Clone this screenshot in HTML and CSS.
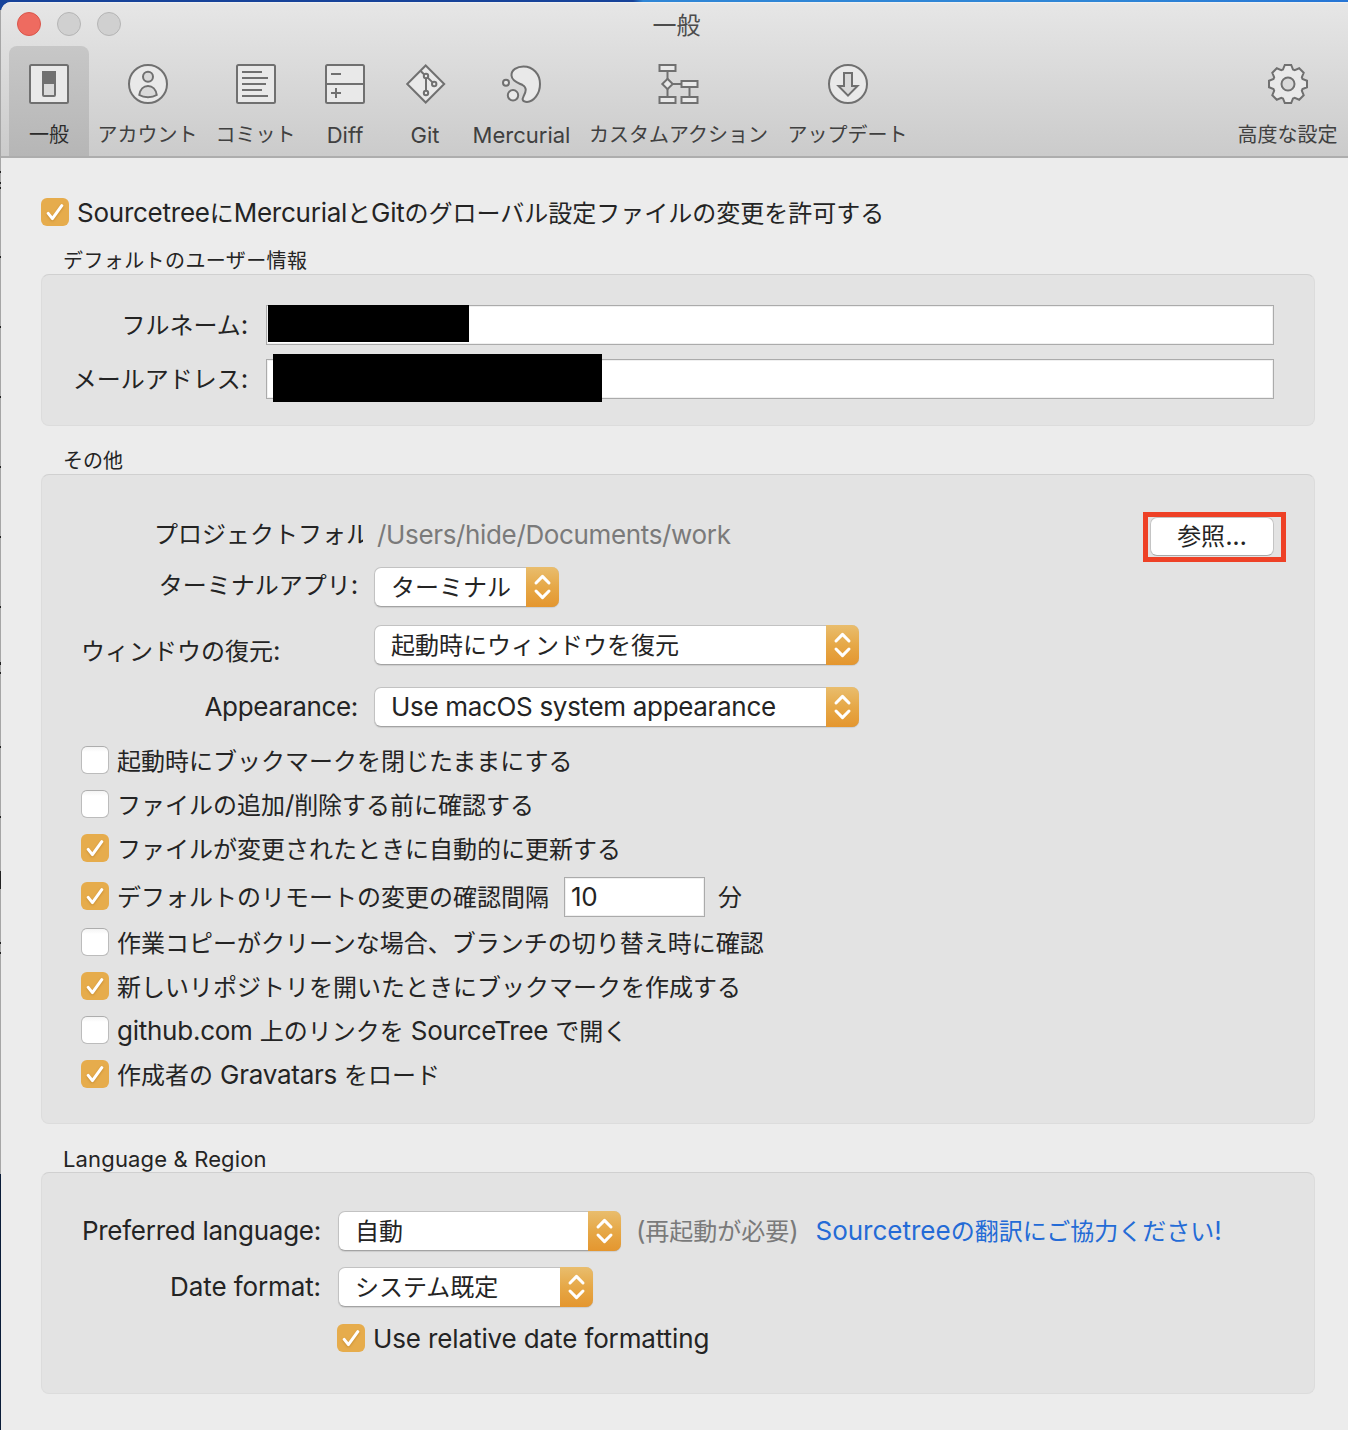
FILE: index.html
```html
<!DOCTYPE html>
<html lang="ja">
<head>
<meta charset="utf-8">
<title>一般</title>
<link rel="stylesheet" href="styles.css">
</head>
<body>
<svg class="defs" width="0" height="0" aria-hidden="true">
  <symbol id="check" viewBox="0 0 28 28"><path d="M7.2 15.4 11.4 20.6 20.8 7.6"/></symbol>
  <symbol id="updown" viewBox="0 0 33 40"><path d="M10 16 16.5 9.4 23 16M10 24 16.5 30.6 23 24"/></symbol>
</svg>
<div class="window">
  <header class="header">
    <div class="titlebar">
      <div class="lights"><i class="light close"></i><i class="light"></i><i class="light"></i></div>
      <h1 class="title">一般</h1>
    </div>
    <nav class="toolbar">
      <div class="tool general active">
        <svg class="icon" viewBox="0 0 40 40"><rect x="1" y="1" width="38" height="38" rx="1.5"/><rect class="plain" x="14" y="8" width="12" height="24" rx="1"/><path class="solid" d="M14 8h12v11H14z"/></svg>
        <span>一般</span>
      </div>
      <div class="tool account">
        <svg class="icon" viewBox="0 0 40 40"><circle cx="20" cy="20" r="19"/><circle class="plain" cx="20" cy="12.8" r="5"/><path class="plain" d="M11.3 31C12 25.500 15.500 22 20 22s8 3.500 8.700 9c-2.500 1.600-5.600 2.300-8.700 2.300s-6.200-.7-8.700-2.300z"/></svg>
        <span>アカウント</span>
      </div>
      <div class="tool commit">
        <svg class="icon" viewBox="0 0 40 40"><rect x="1" y="1" width="38" height="38" rx="1.5"/><path d="M6 8h20M6 14h26M6 20h24M6 26h20M6 32h26"/></svg>
        <span>コミット</span>
      </div>
      <div class="tool diff">
        <svg class="icon" viewBox="0 0 40 40"><rect x="1" y="1" width="38" height="38" rx="1.5"/><path d="M1 20h38M6 10h10M6 29h10M11 24v10"/></svg>
        <span class="en">Diff</span>
      </div>
      <div class="tool git">
        <svg class="icon" viewBox="-0.7 0 40 40"><path d="M20 1.500 38.500 20 20 38.500 1.500 20z"/><path d="M15 7l3.500 3.500M20.300 14v13M22 13.600l4.800 4.800"/><circle cx="20.300" cy="12" r="2.200"/><circle cx="28.500" cy="20" r="2.200"/><circle cx="20.300" cy="29" r="2.200"/></svg>
        <span class="en">Git</span>
      </div>
      <div class="tool mercurial">
        <svg class="icon" viewBox="0.5 0 40 40"><circle cx="4.500" cy="18.700" r="3"/><circle cx="11.500" cy="31.300" r="5.200"/><path d="M22 2.500C31.500 2.500 38.500 10 38.500 20S32 37.900 25.500 37.900C21 37.900 20.300 35.500 22 32.500C24.800 27.500 25.500 23.500 21 21C17.500 19.200 10.300 17.500 10 11.500C9.700 6 15.500 2.500 22 2.500z"/></svg>
        <span class="en">Mercurial</span>
      </div>
      <div class="tool custom">
        <svg class="icon" viewBox="0.5 0 40 40"><path d="M9 7v9M9 24v9M14 20h9M31 24v9"/><rect x="1" y="1" width="16" height="6"/><rect x="23" y="17" width="16" height="6"/><rect x="1" y="33" width="16" height="6"/><rect x="23" y="33" width="16" height="6"/><path d="M9 14.800 14.200 20 9 25.200 3.800 20z"/></svg>
        <span>カスタムアクション</span>
      </div>
      <div class="tool update">
        <svg class="icon" viewBox="0 0 40 40"><circle cx="20" cy="20" r="19"/><path class="plain" d="M16 9h8v13h5.500L20 31.600 10.500 22H16z"/></svg>
        <span>アップデート</span>
      </div>
      <div class="tool advanced">
        <svg class="icon" viewBox="0 0 40 40"><path d="M15 5.500 16.800 1H23.200L25 5.500 26.700 6.200 31.200 4.300 35.700 8.800 33.800 13.300 34.500 15 39 16.800V23.200L34.500 25 33.800 26.700 35.700 31.200 31.200 35.700 26.700 33.800 25 34.500 23.200 39H16.800L15 34.500 13.300 33.800 8.800 35.700 4.300 31.200 6.200 26.700 5.500 25 1 23.200V16.800L5.500 15 6.200 13.300 4.300 8.800 8.800 4.300 13.300 6.200z"/><circle class="plain" cx="20" cy="20" r="6.500"/></svg>
        <span>高度な設定</span>
      </div>
    </nav>
  </header>

  <main class="content">
    <label class="check-row"><span class="box on"><svg><use href="#check"/></svg></span><span><span class="en">Sourcetree</span>に<span class="en">Mercurial</span>と<span class="en">Git</span>のグローバル設定ファイルの変更を許可する</span></label>

    <h2 class="group-title user-title">デフォルトのユーザー情報</h2>
    <section class="group user">
      <div class="field-row"><span class="label">フルネーム<span class="en">:</span></span><div class="field"><i class="redacted name"></i></div></div>
      <div class="field-row"><span class="label">メールアドレス<span class="en">:</span></span><div class="field"><i class="redacted mail"></i></div></div>
    </section>

    <h2 class="group-title other-title">その他</h2>
    <section class="group other">
      <div class="form-row project"><span class="label clipped">プロジェクトフォル</span><span class="path en">/Users/hide/Documents/work</span><div class="browse"><button class="button">参照<span class="en">...</span></button></div></div>
      <div class="form-row terminal"><span class="label raised">ターミナルアプリ<span class="en">:</span></span><div class="select w185"><span>ターミナル</span><svg class="arrows"><use href="#updown"/></svg></div></div>
      <div class="form-row restore"><span class="label">ウィンドウの復元<span class="en">:</span></span><div class="select w485"><span>起動時にウィンドウを復元</span><svg class="arrows"><use href="#updown"/></svg></div></div>
      <div class="form-row appearance"><span class="label en">Appearance:</span><div class="select w485"><span class="en">Use macOS system appearance</span><svg class="arrows"><use href="#updown"/></svg></div></div>
      <div class="checks">
        <label class="check-row ja"><span class="box"></span><span>起動時にブックマークを閉じたままにする</span></label>
        <label class="check-row"><span class="box"></span><span>ファイルの追加<span class="en">/</span>削除する前に確認する</span></label>
        <label class="check-row ja"><span class="box on"><svg><use href="#check"/></svg></span><span>ファイルが変更されたときに自動的に更新する</span></label>
        <div class="check-row interval"><span class="box on"><svg><use href="#check"/></svg></span><span>デフォルトのリモートの変更の確認間隔</span><div class="field number en">10</div><span class="unit">分</span></div>
        <label class="check-row ja"><span class="box"></span><span>作業コピーがクリーンな場合、ブランチの切り替え時に確認</span></label>
        <label class="check-row ja"><span class="box on"><svg><use href="#check"/></svg></span><span>新しいリポジトリを開いたときにブックマークを作成する</span></label>
        <label class="check-row"><span class="box"></span><span><span class="en">github.com </span>上のリンクを<span class="en"> SourceTree </span>で開く</span></label>
        <label class="check-row"><span class="box on"><svg><use href="#check"/></svg></span><span>作成者の<span class="en"> Gravatars </span>をロード</span></label>
      </div>
    </section>

    <h2 class="group-title region-title en">Language &amp; Region</h2>
    <section class="group region">
      <div class="region-row"><span class="label en">Preferred language:</span><div class="select w283"><span>自動</span><svg class="arrows"><use href="#updown"/></svg></div><span class="note"><span class="en">(</span>再起動が必要<span class="en">)</span></span><a class="link"><span class="en">Sourcetree</span>の翻訳にご協力ください<span class="en">!</span></a></div>
      <div class="region-row"><span class="label en date">Date format:</span><div class="select w255"><span>システム既定</span><svg class="arrows"><use href="#updown"/></svg></div></div>
      <label class="check-row relative"><span class="box on"><svg><use href="#check"/></svg></span><span class="en">Use relative date formatting</span></label>
    </section>
  </main>
</div>
</body>
</html>
```
FILE: styles.css
```css
* { box-sizing: border-box; }

body {
  margin: 0;
  height: 1430px;
  padding: 2px 0 0 1px;
  overflow: hidden;
  background:
    linear-gradient(90deg, #17439a 0 633px, #2f86d6 643px 1100px, #2675d5) 0 0 / 100% 2px no-repeat,
    linear-gradient(#17439a, #17439a) 0 0 / 12px 10px no-repeat,
    linear-gradient(#a6a6a6 0 171px, #222 171px 173px, #a6a6a6 173px 182px, #222 182px 184px, #a6a6a6 184px 187px, #222 187px 189px, #a6a6a6 189px 256px, #222 256px 258px, #a6a6a6 258px 326px, #222 326px 328px, #a6a6a6 328px 396px, #222 396px 398px, #a6a6a6 398px 466px, #222 466px 468px, #a6a6a6 468px 536px, #222 536px 538px, #a6a6a6 538px 606px, #222 606px 608px, #a6a6a6 608px 662px, #222 662px 665px, #a6a6a6 665px 672px, #222 672px 674px, #a6a6a6 674px 746px, #222 746px 748px, #a6a6a6 748px 816px, #222 816px 818px, #a6a6a6 818px 871px, #222 871px 889px, #a6a6a6 889px 942px, #222 942px 944px, #a6a6a6 944px 952px, #222 952px 954px, #a6a6a6 954px 1174px, #0a1c38 1174px) 0 0 / 2px 100% no-repeat,
    #ececec;
  font: 24px/28px Inter, "Noto Sans CJK JP", sans-serif;
  color: #242424;
}

.defs { position: absolute; }
.en { font-size: 26px; letter-spacing: -0.25px; }

.window {
  height: 1428px;
  border-radius: 10px 0 0 0;
  overflow: hidden;
  background: #ececec;
}

/* Title bar and toolbar */
.header {
  height: 156px;
  border-bottom: 2px solid #adadad;
  background: linear-gradient(#f3f3f3 0, #e6e6e6 2px, #cbcbcb 100%);
}
.titlebar {
  display: grid;
  grid-template-columns: 120px 1fr 132px;
  align-items: center;
  height: 44px;
  padding-left: 16px;
}
.lights { display: flex; gap: 16px; }
.light {
  width: 24px;
  height: 24px;
  border: 1px solid #b4b4b4;
  border-radius: 50%;
  background: #d0d0d0;
}
.light.close { border-color: #d9564b; background: #ee6b60; }
.title {
  margin: 3px 0 0;
  font-size: 24px;
  font-weight: 400;
  text-align: center;
  color: #4c4c4c;
}
.toolbar { display: flex; height: 110px; padding-left: 8px; }
.tool {
  display: flex;
  flex-direction: column;
  align-items: center;
  gap: 18px;
  padding-top: 18px;
  border-radius: 8px 8px 0 0;
  font-size: 20px;
  line-height: 26px;
  white-space: nowrap;
  color: #404040;
}
.tool .en { font-size: 22px; letter-spacing: 0; }
.tool.active { background: linear-gradient(#c7c7c7, #b6b6b6); color: #2b2b2b; }
.general, .diff, .git { width: 80px; }
.account { width: 117px; }
.commit { width: 99px; }
.mercurial { width: 113px; }
.custom { width: 201px; }
.update { width: 137px; }
.advanced { width: 121px; margin-left: auto; }
.icon {
  width: 40px;
  height: 40px;
  overflow: visible;
  fill: #e9e9e9;
  stroke: #707070;
  stroke-width: 2;
}
.icon .plain { fill: #d9d9d9; }
.icon .solid { fill: #707070; }

/* Checkboxes */
.content { padding: 40px 33px 0 40px; }
.check-row { display: flex; align-items: center; gap: 8px; height: 28px; white-space: nowrap; }
.check-row > span:not(.box) { margin-top: 2px; }
.check-row.ja > span:not(.box) { margin-top: 3px; }
.box {
  flex: none;
  width: 28px;
  height: 28px;
  border: 1px solid #bcbcbc;
  border-top-color: #adadad;
  border-radius: 6px;
  background: linear-gradient(#f4f4f4, #fff 5px);
}
.box.on { border: 0; background: #e6ac4c; }
.box svg {
  display: block;
  width: 28px;
  height: 28px;
  fill: none;
  stroke: #fff;
  stroke-width: 3;
  stroke-linecap: round;
  stroke-linejoin: round;
  filter: drop-shadow(0 1px 1px #a56c1480);
}

/* Group boxes */
.group-title { margin: 0 0 -1px 22px; font-size: 20px; line-height: 28px; font-weight: 400; }
.group-title.en { font-size: 22px; letter-spacing: 0.15px; }
.user-title { margin-top: 21px; letter-spacing: 0.4px; }
.other-title { margin-top: 21px; }
.region-title { margin-top: 21px; }
.group {
  border: 1px solid #dcdcdc;
  border-top-color: #d0d0d0;
  border-radius: 8px;
  background: #e3e3e3;
}
.user { display: flex; flex-direction: column; gap: 14px; height: 152px; padding: 30px 40px 0 0; }
.other { height: 650px; padding: 42px 40px 0 39px; }
.region { height: 222px; padding: 38px 0 0; }

.label { text-align: right; white-space: nowrap; }
.field-row { display: grid; grid-template-columns: 206px 1fr; gap: 18px; align-items: center; }
.field {
  position: relative;
  height: 40px;
  border: 1px solid #ababab;
  box-shadow: inset 0 0 0 1px #f0f0f0;
  background: #fff;
}
.redacted { position: absolute; background: #000; }
.redacted.name { left: 1px; top: -1px; width: 201px; height: 37px; }
.redacted.mail { left: 6px; top: -6px; width: 329px; height: 48px; }

/* Form rows */
.form-row { display: grid; grid-template-columns: 277px auto 1fr; column-gap: 16px; align-items: center; height: 40px; }
.clipped { width: 209px; margin: -5px 0 0 73px; overflow: hidden; text-align: left; }
.path { margin: -4px 0 0 3px; letter-spacing: -0.35px; color: #7a7a7a; }
.raised { margin-top: -3px; }
.terminal { margin-top: 10px; }
.restore { margin-top: 18px; }
.restore .label { margin-top: 12px; text-align: left; }
.restore .select { margin-top: -1px; }
.appearance { margin-top: 22px; }
.appearance .en { letter-spacing: -0.32px; }
.browse { position: relative; justify-self: end; margin-top: -2px; }
.browse::after {
  content: "";
  position: absolute;
  inset: -5px -12px -6px -7px;
  border: 5px solid #ee4126;
}
.button {
  display: block;
  width: 124px;
  height: 39px;
  padding: 0;
  border: 1px solid #c4c4c4;
  border-bottom-color: #a8a8a8;
  border-radius: 7px;
  background: #fff;
  font: inherit;
  color: inherit;
}
.select {
  display: flex;
  justify-content: space-between;
  align-items: center;
  height: 40px;
  padding-left: 16px;
  border: 1px solid #c2c2c2;
  border-bottom-color: #a3a3a3;
  border-radius: 7px;
  box-shadow: 0 1px 1px #0000001a;
  background: #fff;
  white-space: nowrap;
}
.select > span:not(.en) { margin-top: 1px; }
.w185 { width: 185px; }
.w485 { width: 485px; }
.w283 { width: 283px; }
.w255 { width: 255px; }
.arrows {
  flex: none;
  width: 33px;
  height: 40px;
  margin: -1px;
  border-radius: 0 7px 7px 0;
  background: linear-gradient(#e9bd6d, #e6a847 50%, #e4962f);
  fill: none;
  stroke: #fff;
  stroke-width: 3;
  stroke-linecap: round;
  stroke-linejoin: round;
}

.checks { display: flex; flex-direction: column; gap: 16px; margin-top: 19px; }
.interval { height: 40px; margin: -1px 0 -5px; }
.interval .box { margin-top: -2px; }
.number { width: 141px; margin-left: 7px; padding: 5px 6px; }
.check-row .unit { margin-left: 5px; }

.region-row { display: grid; grid-template-columns: 279px auto auto 1fr; align-items: center; height: 40px; margin-bottom: 16px; }
.region-row .select { margin-left: 17px; }
.date { letter-spacing: -0.1px; }
.note { margin-left: 15px; color: #7a7a7a; }
.link { margin-left: 17px; color: #246bd6; }
.link .en { letter-spacing: 0; }
.relative { margin: 17px 0 0 295px; }
.relative .en { letter-spacing: -0.12px; }
```
